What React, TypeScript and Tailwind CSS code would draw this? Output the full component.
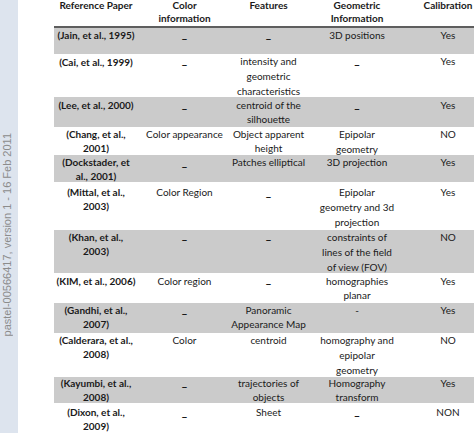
import React from "react";

type Cell = { t: string; c?: string };
type Row = { h: string; gray: boolean; cells: Cell[] };

const D = "–";

// rows of the comparison table, line breaks as in the source PDF
const rows: Row[] = [
  {
    h: "h-[26px]",
    gray: true,
    cells: [
      { t: "(Jain, et al., 1995)" },
      { t: D, c: "pt-[6px]" },
      { t: D, c: "pt-[6px]" },
      { t: "3D positions" },
      { t: "Yes" },
    ],
  },
  {
    h: "h-[43px]",
    gray: false,
    cells: [
      { t: "(Cai, et al., 1999)", c: "pt-[1px]" },
      { t: D, c: "pt-[6px]" },
      { t: "intensity and\ngeometric\ncharacteristics", c: "leading-[15px]" },
      { t: D, c: "pt-[6px]" },
      { t: "Yes" },
    ],
  },
  {
    h: "h-[30px]",
    gray: true,
    cells: [
      { t: "(Lee, et al., 2000)", c: "pt-[1px]" },
      { t: D, c: "pt-[7px]" },
      { t: "centroid of the\nsilhouette", c: "pt-[1px] leading-[13px]" },
      { t: D, c: "pt-[7px]" },
      { t: "Yes", c: "pt-[1px]" },
    ],
  },
  {
    h: "h-[28px]",
    gray: false,
    cells: [
      { t: "(Chang, et al.,\n2001)", c: "leading-[13px]" },
      { t: "Color appearance" },
      { t: "Object apparent\nheight", c: "leading-[13px]" },
      { t: "Epipolar\ngeometry", c: "leading-[15px]" },
      { t: "NO" },
    ],
  },
  {
    h: "h-[27px]",
    gray: true,
    cells: [
      { t: "(Dockstader, et\nal., 2001)", c: "leading-[12px]" },
      { t: D, c: "pt-[7px]" },
      { t: "Patches elliptical" },
      { t: "3D projection" },
      { t: "Yes" },
    ],
  },
  {
    h: "h-[48px]",
    gray: false,
    cells: [
      { t: "(Mittal, et al.,\n2003)", c: "pt-[3px]" },
      { t: "Color Region", c: "pt-[3px]" },
      { t: D, c: "pt-[10px]" },
      { t: "Epipolar\ngeometry and 3d\nprojection", c: "pt-[3px] leading-[15px]" },
      { t: "Yes", c: "pt-[3px]" },
    ],
  },
  {
    h: "h-[43px]",
    gray: true,
    cells: [
      { t: "(Khan, et al.,\n2003)", c: "leading-[13px]" },
      { t: D, c: "pt-[5px]" },
      { t: D, c: "pt-[5px]" },
      { t: "constraints of\nlines of the field\nof view (FOV)", c: "leading-[15px]" },
      { t: "NO" },
    ],
  },
  {
    h: "h-[30px]",
    gray: false,
    cells: [
      { t: "(KIM, et al., 2006)", c: "pt-[1px]" },
      { t: "Color region", c: "pt-[1px]" },
      { t: D, c: "pt-[6px]" },
      { t: "homographies\nplanar", c: "pt-[1px]" },
      { t: "Yes", c: "pt-[1px]" },
    ],
  },
  {
    h: "h-[30px]",
    gray: true,
    cells: [
      { t: "(Gandhi, et al.,\n2007)", c: "leading-[12px]" },
      { t: D, c: "pt-[6px]" },
      { t: "Panoramic\nAppearance Map", c: "leading-[13px]" },
      { t: "-" },
      { t: "Yes" },
    ],
  },
  {
    h: "h-[44px]",
    gray: false,
    cells: [
      { t: "(Calderara, et al.,\n2008)" },
      { t: "Color" },
      { t: "centroid" },
      { t: "homography and\nepipolar\ngeometry", c: "leading-[15px]" },
      { t: "NO" },
    ],
  },
  {
    h: "h-[26px]",
    gray: true,
    cells: [
      { t: "(Kayumbi, et al.,\n2008)", c: "-mt-[1px]" },
      { t: D, c: "pt-[5px]" },
      { t: "trajectories of\nobjects", c: "-mt-[1px]" },
      { t: "Homography\ntransform", c: "-mt-[1px]" },
      { t: "Yes", c: "-mt-[1px]" },
    ],
  },
  {
    h: "h-[40px]",
    gray: false,
    cells: [
      { t: "(Dixon, et al.,\n2009)", c: "pt-[2px]" },
      { t: D, c: "pt-[9px]" },
      { t: "Sheet", c: "pt-[2px]" },
      { t: D, c: "pt-[8px]" },
      { t: "NON", c: "pt-[2px]" },
    ],
  },
];

const cols = "grid grid-cols-[84px_93px_75px_102px_80px]";

export default function App() {
  return (
    <div className="flex h-[433px] w-[474px] overflow-hidden bg-white font-['Lato','Liberation_Sans',sans-serif] text-[10px] text-[#1a1a1a]">
      <div className="flex h-full w-[18px] shrink-0 flex-col bg-[#dde4ee]">
        <div className="mt-[133px] ml-[1px] rotate-180 font-['Liberation_Sans',sans-serif] text-[11px] leading-[12px] whitespace-nowrap text-[#8c8c8c] [writing-mode:vertical-rl]">
          pastel-00566417, version 1 - 16 Feb 2011
        </div>
      </div>

      <div className="ml-[36px] w-[434px] shrink-0">
        <div className={`${cols} -mt-[1px] h-[29px] border-b-2 border-[#5e5e5e] font-bold leading-[13px]`}>
          <div className="text-center">Reference Paper</div>
          <div className="text-center whitespace-pre-line">{"Color\ninformation"}</div>
          <div className="text-center">Features</div>
          <div className="text-center whitespace-pre-line">{"Geometric\nInformation"}</div>
          <div className="text-center">Calibration</div>
        </div>

        {rows.map((row, i) => (
          <div key={i} className={`${cols} ${row.h} ${row.gray ? "bg-[#cbcbcb]" : "bg-white"}`}>
            {row.cells.map((cell, j) => (
              <div
                key={j}
                className={`text-center whitespace-pre ${
                  cell.t === D ? "text-[11px] font-bold leading-[10px]" : "leading-[14px]"
                } ${j === 0 ? "font-bold" : ""} ${cell.c ?? ""}`}
              >
                {cell.t}
              </div>
            ))}
          </div>
        ))}
      </div>
    </div>
  );
}
